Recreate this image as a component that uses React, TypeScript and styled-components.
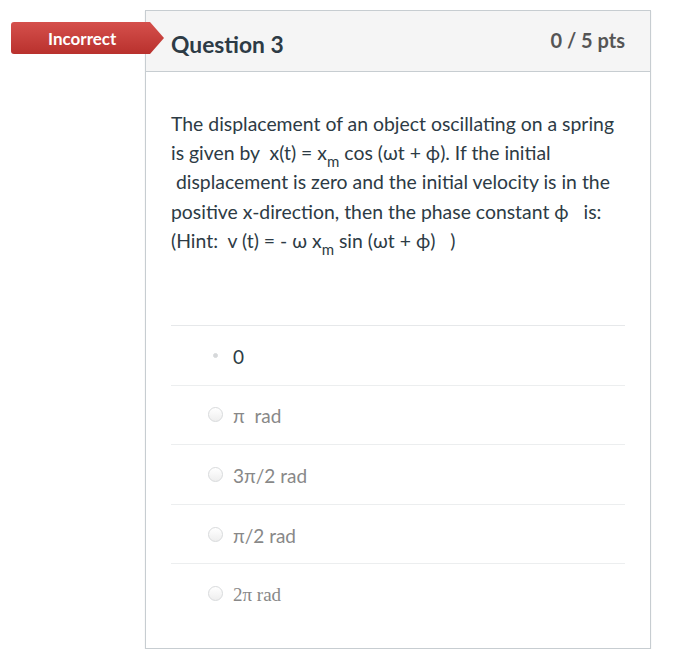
import React from "react";
import styled, { createGlobalStyle } from "styled-components";

const Global = createGlobalStyle`
  html, body { margin: 0; padding: 0; background: #fff; }
  body { font-family: Lato, "Noto Sans", sans-serif; color: #2d3b45; }
`;

const Page = styled.div`
  position: relative;
  padding: 10px 0 0 145px;
`;

const Card = styled.div`
  width: 504px;
  height: 637px;
  border: 1px solid #c7cdd1;
  box-shadow: 0 1px 1px rgba(0,0,0,0.12);
  display: flex;
  flex-direction: column;
  background: #fff;
`;

const Header = styled.div`
  height: 60px;
  background: #f5f5f5;
  border-bottom: 1px solid #c7cdd1;
  display: flex;
  align-items: center;
  justify-content: space-between;
  padding: 0 25px 0 25px;
`;

const Title = styled.div`
  font-size: 22.8px;
  font-weight: 700;
  color: #2d3b45;
  margin-top: 6px;
`;

const Points = styled.div`
  font-size: 20px;
  font-weight: 700;
  color: #555;
  margin-top: -3px;
`;

const Badge = styled.div`
  position: absolute;
  left: 11px;
  top: 22px;
  width: 153px;
  height: 32px;
  display: flex;
  align-items: center;
  justify-content: flex-start;
  padding-left: 37px;
  box-sizing: border-box;
  color: #fff;
  font-size: 17px;
  font-weight: 700;
  background: linear-gradient(#d5504c, #b9312d);
  clip-path: polygon(0 0, 139px 0, 153px 50%, 139px 100%, 0 100%);
  border-radius: 3px 0 0 3px;
`;

const Body = styled.div`
  padding: 37px 25px 0 25px;
`;

const Text = styled.div`
  font-size: 19.4px;
  line-height: 29.2px;
  color: #2d3b45;
`;

const Sub = styled.sub`
  font-size: 15px;
  vertical-align: -7px;
  line-height: 0;
`;

const Answers = styled.div`
  margin-top: 70px;
  border-top: 1px solid #e6e8ea;
`;

const Row = styled.div`
  height: 58.6px;
  border-bottom: 1px solid #eceeef;
  display: flex;
  align-items: center;
  padding-left: 37px;
  &:last-child { border-bottom: none; }
`;

const Radio = styled.span<{ $tiny?: boolean }>`
  display: inline-block;
  box-sizing: border-box;
  width: ${(p) => (p.$tiny ? "5px" : "15px")};
  height: ${(p) => (p.$tiny ? "5px" : "15px")};
  margin: ${(p) => (p.$tiny ? "0 15px 0 5px" : "0 10px 0 0")};
  border-radius: 50%;
  border: 1px solid #d8dadc;
  background: ${(p) => (p.$tiny ? "#d6d8da" : "linear-gradient(#ffffff, #eeeeee)")};
`;

const Label = styled.span<{ $dark?: boolean; $serif?: boolean }>`
  font-size: 19px;
  color: ${(p) => (p.$dark ? "#2d3b45" : "#888")};
  font-family: ${(p) => (p.$serif ? '"Liberation Serif", serif' : 'Lato, sans-serif')};
  margin-top: 2px;
`;

export default function App() {
  return (
    <>
      <Global />
      <Page>
        <Card>
          <Header>
            <Title>Question 3</Title>
            <Points>0 / 5 pts</Points>
          </Header>
          <Body>
            <Text>
              The displacement of an object oscillating on a spring
              <br />
              is given by&nbsp; x(t) = x<Sub>m</Sub>&nbsp;cos (ωt + ϕ). If the initial
              <br />
              &nbsp;displacement is zero and the initial velocity is in the
              <br />
              positive x-direction, then the phase constant ϕ &nbsp;&nbsp;is:
              <br />
              (Hint:&nbsp; v (t) = - ω x<Sub>m</Sub>&nbsp;sin (ωt + ϕ)&nbsp;&nbsp; )
            </Text>
            <Answers>
              <Row>
                <Radio $tiny />
                <Label $dark>0</Label>
              </Row>
              <Row>
                <Radio />
                <Label>π&nbsp; rad</Label>
              </Row>
              <Row>
                <Radio />
                <Label>3π/2 rad</Label>
              </Row>
              <Row>
                <Radio />
                <Label>π/2 rad</Label>
              </Row>
              <Row>
                <Radio />
                <Label $serif>2π rad</Label>
              </Row>
            </Answers>
          </Body>
        </Card>
        <Badge>Incorrect</Badge>
      </Page>
    </>
  );
}
